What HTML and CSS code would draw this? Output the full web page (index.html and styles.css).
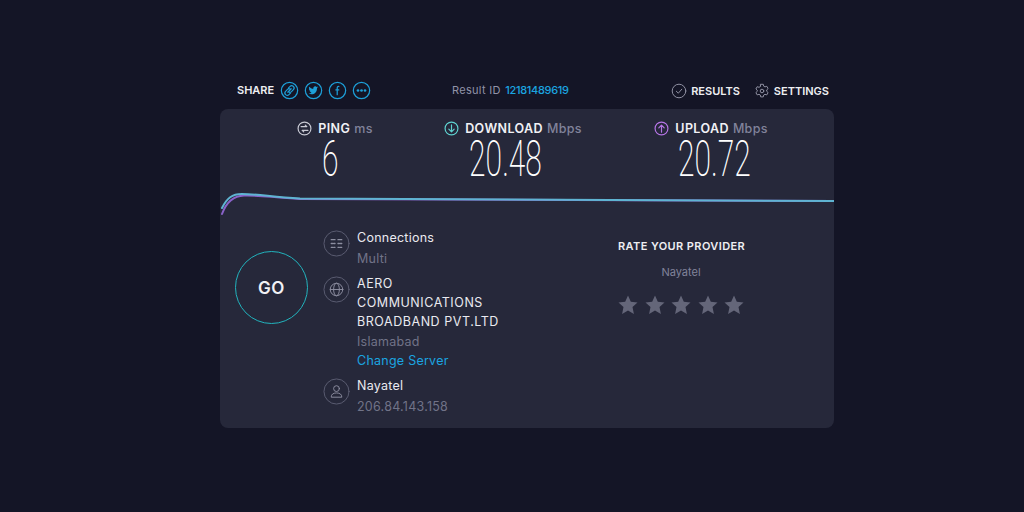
FILE: index.html
```html
<!DOCTYPE html>
<html lang="en">
  <head>
    <meta charset="UTF-8" />
    <title>Speedtest Result</title>
    <link rel="stylesheet" href="styles.css">
  </head>
  <body>
    <div class="wrap">
      <div class="top-bar">
        <div class="share">
          <span class="share-label">SHARE</span>
          <svg class="share-icon" viewBox="0 0 20 20"><circle cx="10" cy="10" r="8.6"/><path d="M8.2 11.8l3.6-3.6M9 7.2l1.6-1.5a2.3 2.3 0 0 1 3.5 3.4l-2 2.1a2.3 2.3 0 0 1-3.2 0M11 12.8l-1.6 1.5a2.3 2.3 0 0 1-3.5-3.4l2-2.1a2.3 2.3 0 0 1 3.2 0"/></svg>
          <svg class="share-icon" viewBox="0 0 20 20"><circle cx="10" cy="10" r="8.6"/><path class="fill" d="M15 6.6c-.4.2-.8.3-1.2.3.4-.3.8-.7.9-1.1-.4.2-.9.4-1.3.5a2.1 2.1 0 0 0-3.600 1.900c-1.700-.1-3.200-.9-4.300-2.200-.6 1-.3 2.200.6 2.800-.3 0-.7-.1-.9-.3 0 1 .7 1.900 1.700 2.100-.3.1-.6.1-.9 0 .3.800 1 1.400 1.900 1.500-.9.7-2 1-3.100.9 3.500 2.200 8.800.6 8.900-5.500.5-.3.9-.7 1.200-1.100z"/></svg>
          <svg class="share-icon" viewBox="0 0 20 20"><circle cx="10" cy="10" r="8.6"/><path d="M11.500 5.800c-1.200-.2-1.800.5-1.800 1.600v7M8.300 9.400h3"/></svg>
          <svg class="share-icon" viewBox="0 0 20 20"><circle cx="10" cy="10" r="8.600"/><circle class="fill" cx="6.300" cy="10" r="1.400"/><circle class="fill" cx="10" cy="10" r="1.400"/><circle class="fill" cx="13.700" cy="10" r="1.400"/></svg>
        </div>
        <div class="result-id">Result ID <span class="result-number">12181489619</span></div>
        <div class="nav">
          <span class="nav-item">
            <svg class="nav-icon" viewBox="0 0 16 16"><circle cx="8" cy="8" r="6.800"/><path d="M5.300 8.200l2 2 3.500-4"/></svg>
            RESULTS
          </span>
          <span class="nav-item">
            <svg class="nav-icon" viewBox="0 0 16 16"><path d="M6.700 1.300h2.600l.4 1.900 1.300.7 1.800-.6 1.300 2.300-1.400 1.300v1.400l1.400 1.300-1.300 2.300-1.800-.6-1.300.7-.4 1.900H6.700l-.4-1.900-1.300-.7-1.800.6-1.300-2.300 1.400-1.300V7.300L1.900 6l1.300-2.300 1.800.6 1.300-.7z"/><circle cx="8" cy="8" r="1.800"/></svg>
            SETTINGS
          </span>
        </div>
      </div>

      <div class="card">
        <div class="stats">
          <div class="stat">
            <div class="stat-head">
              <svg class="stat-icon ping" viewBox="0 0 14 14"><circle cx="7" cy="7" r="6"/><path d="M3.800 5.200h5.400l-1.500-1.400M10.200 8.800H4.800l1.500 1.400"/></svg>
              <span class="stat-name">PING</span> <span class="stat-unit">ms</span>
            </div>
            <div class="stat-value ping-value">6</div>
          </div>
          <div class="stat">
            <div class="stat-head">
              <svg class="stat-icon download" viewBox="0 0 14 14"><circle cx="7" cy="7" r="6"/><path d="M7 3.600v6.400M4.500 7.600L7 10.100l2.500-2.500"/></svg>
              <span class="stat-name">DOWNLOAD</span> <span class="stat-unit">Mbps</span>
            </div>
            <div class="stat-value download-value">20.48</div>
          </div>
          <div class="stat">
            <div class="stat-head">
              <svg class="stat-icon upload" viewBox="0 0 14 14"><circle cx="7" cy="7" r="6"/><path d="M7 10.400V4M4.500 6.400L7 3.900l2.500 2.500"/></svg>
              <span class="stat-name">UPLOAD</span> <span class="stat-unit">Mbps</span>
            </div>
            <div class="stat-value upload-value">20.72</div>
          </div>
        </div>

        <svg class="graph" viewBox="0 0 614 36" preserveAspectRatio="none">
          <path class="line-up" d="M2 30C6 19 12 12 24 11.500C40 11 52 13.500 80 15C200 17 400 17 614 17"/>
          <path class="line-down" d="M2 24C7 14 12 10 22 10C38 10 52 13 80 14.500C200 16.500 400 17 614 17"/>
        </svg>

        <div class="bottom">
          <div class="go-area">
            <div class="go-button">GO</div>
          </div>
          <div class="details">
            <div class="detail-row">
              <svg class="detail-icon" viewBox="0 0 28 28"><circle cx="14" cy="14" r="13"/><path class="dots" d="M8.500 10h5M8.500 14h5M8.500 18h5M15.500 10h4M15.500 14h4M15.500 18h4" stroke-dasharray="1.500 1"/></svg>
              <div>
                <div class="detail-main">Connections</div>
                <div class="detail-sub">Multi</div>
              </div>
            </div>
            <div class="detail-row">
              <svg class="detail-icon" viewBox="0 0 28 28"><circle cx="14" cy="14" r="13"/><circle class="inner" cx="14" cy="14" r="6.500"/><ellipse class="inner" cx="14" cy="14" rx="3" ry="6.500"/><path class="inner" d="M7.500 14h13"/></svg>
              <div>
                <div class="detail-main caps">AERO<br>COMMUNICATIONS<br>BROADBAND PVT.LTD</div>
                <div class="detail-sub">Islamabad</div>
                <div class="change-server">Change Server</div>
              </div>
            </div>
            <div class="detail-row">
              <svg class="detail-icon" viewBox="0 0 28 28"><circle cx="14" cy="14" r="13"/><circle class="inner" cx="14" cy="11" r="3"/><path class="inner" d="M8.500 19.500c0-2.500 2-4 5.500-4s5.500 1.500 5.500 4z"/></svg>
              <div>
                <div class="detail-main">Nayatel</div>
                <div class="detail-sub">206.84.143.158</div>
              </div>
            </div>
          </div>
          <div class="rate">
            <div class="rate-title">RATE YOUR PROVIDER</div>
            <div class="rate-name">Nayatel</div>
            <div class="stars">
              <svg class="star" viewBox="0 0 20 20"><path d="M10 .5l2.800 6.300 6.700.7-5 4.600 1.400 6.800L10 15.400l-5.900 3.500 1.400-6.800-5-4.600 6.700-.7z"/></svg>
              <svg class="star" viewBox="0 0 20 20"><path d="M10 .5l2.800 6.300 6.700.7-5 4.600 1.400 6.800L10 15.400l-5.900 3.500 1.400-6.800-5-4.600 6.700-.7z"/></svg>
              <svg class="star" viewBox="0 0 20 20"><path d="M10 .5l2.800 6.300 6.700.7-5 4.600 1.400 6.800L10 15.400l-5.900 3.500 1.400-6.800-5-4.600 6.700-.7z"/></svg>
              <svg class="star" viewBox="0 0 20 20"><path d="M10 .5l2.800 6.300 6.700.7-5 4.600 1.400 6.800L10 15.400l-5.900 3.500 1.400-6.800-5-4.600 6.700-.7z"/></svg>
              <svg class="star" viewBox="0 0 20 20"><path d="M10 .5l2.800 6.300 6.700.7-5 4.600 1.400 6.800L10 15.400l-5.900 3.500 1.400-6.800-5-4.600 6.700-.7z"/></svg>
            </div>
          </div>
        </div>
      </div>
    </div>
  </body>
</html>
```

FILE: styles.css
```css
body{
  margin: 0;
  background-color: #141526;
  color: #ffffff;
  font-family: Inter, "Open Sans", sans-serif;
}
svg{
  fill: none;
  stroke-linecap: round;
  stroke-linejoin: round;
  flex-shrink: 0;
}
.wrap{
  width: 614px;
  margin: 0 0 0 220px;
  padding-top: 75px;
}
.top-bar{
  display: grid;
  grid-template-columns: 232px 188px 1fr;
  align-items: center;
  height: 30px;
  margin-bottom: 4px;
}
.share{
  display: flex;
  align-items: center;
  gap: 5px;
  padding-left: 17px;
}
.share-label{
  font-size: 11px;
  font-weight: 600;
  color: #eeeef2;
  margin-right: 1px;
}
.share-icon{
  width: 19px;
  height: 19px;
  stroke: #1d9fd8;
  stroke-width: 1.300;
}
.share-icon .fill{
  fill: #1d9fd8;
  stroke: none;
}
.result-id{
  font-size: 11px;
  color: #9193a8;
  letter-spacing: 0.3px;
}
.result-number{
  color: #1ba5e0;
  font-weight: 500;
  margin-left: 1px;
  letter-spacing: -0.3px;
}
.nav{
  display: flex;
  justify-content: flex-end;
  gap: 14px;
  padding-right: 5px;
  margin-top: 1px;
}
.nav-item{
  display: flex;
  align-items: center;
  gap: 4px;
  font-size: 11px;
  font-weight: 600;
  color: #eeeef2;
}
.nav-icon{
  width: 16px;
  height: 16px;
  stroke: #8f90a2;
  stroke-width: 1;
}
.card{
  background-color: #26283a;
  border-radius: 8px;
  height: 319px;
  overflow: hidden;
}
.stats{
  display: grid;
  grid-template-columns: 150px 206px 190px;
  padding: 11px 0 0 40px;
}
.stat{
  text-align: center;
}
.stat-head{
  display: flex;
  justify-content: center;
  align-items: center;
  gap: 4px;
  height: 16px;
  font-size: 12.500px;
}
.stat-icon{
  width: 15px;
  height: 15px;
  stroke-width: 1.100;
  margin-right: 2px;
}
.stat-icon.ping{
  stroke: #c9cad4;
}
.stat-icon.download{
  stroke: #5fd3d1;
}
.stat-icon.upload{
  stroke: #b675e6;
}
.stat-name{
  font-weight: 600;
  letter-spacing: 0.4px;
  color: #f1f1f5;
}
.stat-unit{
  color: #81839a;
  font-weight: 500;
  letter-spacing: 0.3px;
}
.stat-value{
  font-family: Roboto, sans-serif;
  font-weight: 200;
  font-size: 50px;
  line-height: 46px;
  transform: scaleX(0.6);
  color: #ffffff;
}
.ping-value{
  padding-right: 16px;
}
.download-value{
  padding-right: 25px;
}
.upload-value{
  padding-left: 11px;
}
.graph{
  display: block;
  width: 100%;
  height: 36px;
  margin-top: 2px;
}
.graph path{
  stroke-width: 2;
}
.line-up{
  stroke: #8a62c9;
}
.line-down{
  stroke: #5fb4d2;
}
.bottom{
  display: flex;
  height: 210px;
}
.go-area{
  width: 103px;
  padding: 31px 0 0 15px;
  box-sizing: border-box;
}
.go-button{
  width: 73px;
  height: 73px;
  box-sizing: border-box;
  border: 1px solid #22b3bd;
  border-radius: 50%;
  display: flex;
  align-items: center;
  justify-content: center;
  font-size: 17px;
  font-weight: 600;
  letter-spacing: 0.5px;
  color: #f1f1f5;
}
.details{
  width: 295px;
  display: flex;
  flex-direction: column;
  gap: 4px;
  padding-top: 7px;
}
.detail-row{
  display: flex;
  gap: 7px;
}
.detail-icon{
  width: 27px;
  height: 27px;
  margin-top: 3px;
  stroke: #5c5e72;
  stroke-width: 1;
}
.detail-icon .inner{
  stroke: #8c8ea0;
}
.detail-icon .dots{
  stroke: #8c8ea0;
  stroke-width: 1.300;
}
.detail-main{
  font-size: 12.500px;
  line-height: 19px;
  letter-spacing: 0.25px;
  color: #eaeaf0;
  padding-top: 1px;
}
.caps{
  letter-spacing: 0.55px;
  margin-bottom: -1px;
}
.detail-sub{
  font-size: 12.500px;
  line-height: 20px;
  letter-spacing: 0.25px;
  margin-top: 2px;
  color: #717388;
}
.change-server{
  font-size: 12.500px;
  line-height: 19px;
  letter-spacing: 0.25px;
  margin-top: -1px;
  margin-bottom: 1px;
  color: #1ba5e0;
}
.rate{
  padding-top: 18px;
}
.rate-title{
  font-size: 11px;
  font-weight: 600;
  letter-spacing: 0.4px;
  line-height: 16px;
  color: #eeeef2;
}
.rate-name{
  font-size: 11px;
  line-height: 16px;
  margin-top: 10px;
  color: #81839a;
  text-align: center;
  width: 126px;
}
.stars{
  display: flex;
  gap: 6.500px;
  margin-top: 15px;
}
.star{
  width: 20px;
  height: 20px;
}
.star path{
  fill: #646679;
}
```
